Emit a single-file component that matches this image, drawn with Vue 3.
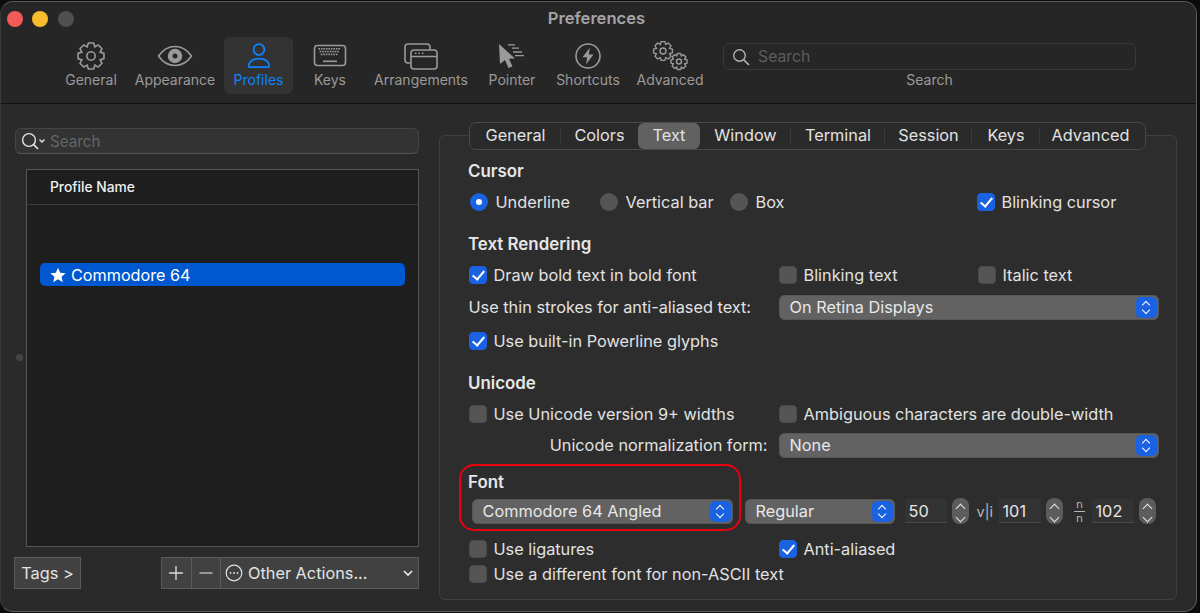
<script setup>
const tools = [
  { name: 'General', w: 70, icon: 'gear' },
  { name: 'Appearance', w: 98, icon: 'eye' },
  { name: 'Profiles', w: 69, icon: 'person', active: true },
  { name: 'Keys', w: 74, icon: 'keys' },
  { name: 'Arrangements', w: 108, icon: 'windows' },
  { name: 'Pointer', w: 74, icon: 'pointer' },
  { name: 'Shortcuts', w: 78, icon: 'bolt' },
  { name: 'Advanced', w: 86, icon: 'gears' }
]

const tabs = [
  { name: 'General', w: 91, sep: true },
  { name: 'Colors', w: 77 },
  { name: 'Text', w: 62, active: true },
  { name: 'Window', w: 91, sep: true },
  { name: 'Terminal', w: 94, sep: true },
  { name: 'Session', w: 87, sep: true },
  { name: 'Keys', w: 68, sep: true },
  { name: 'Advanced', w: 101 }
]

// 8 tooth cog outline, used by the General and Advanced icons
const gearPath = (cx, cy, outer, inner) => {
  const pts = []
  for (let i = 0; i < 8; i++) {
    const a = (i * Math.PI) / 4
    const spots = [[-0.42, inner], [-0.2, outer], [0.2, outer], [0.42, inner]]
    for (const [off, r] of spots) {
      const x = cx + r * Math.cos(a + off)
      const y = cy + r * Math.sin(a + off)
      pts.push(x.toFixed(2) + ' ' + y.toFixed(2))
    }
  }
  return 'M' + pts.join('L') + 'Z'
}

const keyDots = []
for (let y = 0; y < 3; y++) {
  for (let x = 0; x < 9 - y; x++) {
    keyDots.push({ x: 6 + x * 2.5 + y * 1.2, y: 7 + y * 2.8 })
  }
}
</script>

<template>
  <div class="window">
    <header class="toolbar">
      <div class="lights">
        <span class="light red"></span>
        <span class="light yellow"></span>
        <span class="light off"></span>
      </div>
      <div class="title">Preferences</div>
      <div class="tools">
        <div
          v-for="t in tools"
          :key="t.name"
          class="tool"
          :class="{ active: t.active }"
          :style="{ width: t.w + 'px' }"
        >
          <svg class="tool-icon" viewBox="0 0 40 30" width="40" height="30" fill="none" stroke="currentColor" stroke-width="1.6">
            <template v-if="t.icon === 'gear'">
              <path :d="gearPath(20, 15, 13.2, 9.8)" stroke-linejoin="round" />
              <circle cx="20" cy="15" r="4.2" />
            </template>
            <template v-else-if="t.icon === 'eye'">
              <path d="M3.5 15C8 8.5 13.5 5.5 20 5.5S32 8.5 36.5 15C32 21.5 26.5 24.5 20 24.5S8 21.5 3.5 15Z" />
              <circle cx="20" cy="15" r="7.2" fill="currentColor" stroke="none" />
              <circle cx="20" cy="15" r="2.5" fill="#262626" stroke="none" />
            </template>
            <template v-else-if="t.icon === 'person'">
              <circle cx="20" cy="8.5" r="5.4" stroke-width="1.8" />
              <path d="M10 26.2C9.3 20.5 14 17.6 20 17.6S30.7 20.5 30 26.2Z" stroke-width="1.8" stroke-linejoin="round" />
            </template>
            <template v-else-if="t.icon === 'keys'">
              <rect x="4.5" y="4.5" width="31" height="20" rx="3" />
              <rect v-for="(d, i) in keyDots" :key="i" :x="d.x + 2.4" :y="d.y" width="1.6" height="1.6" fill="currentColor" stroke="none" />
              <rect x="13" y="19.5" width="14" height="1.6" fill="currentColor" stroke="none" />
            </template>
            <template v-else-if="t.icon === 'windows'">
              <path d="M9.5 22H7a3 3 0 0 1-3-3V6a3 3 0 0 1 3-3h19a3 3 0 0 1 3 3v2.5" />
              <rect x="10" y="9" width="26" height="19" rx="3" />
              <path d="M10 15.5h26" />
              <path d="M14 12.3h1.500M17.5 12.3h1.500M21 12.3h1.500" stroke-width="1.4" />
            </template>
            <template v-else-if="t.icon === 'pointer'">
              <path d="M7 3 23 17.5 17 17.8 20.5 25.5 16.5 27 13 19 8 23Z" fill="currentColor" stroke="none" />
              <path d="M16 3.8h7M20 7.2h7M21 11h9M23 14.7h9" stroke-width="1.3" />
            </template>
            <template v-else-if="t.icon === 'bolt'">
              <circle cx="20" cy="15" r="12" />
              <path d="M21.8 6.8 14.5 16.3h4.600l-1 6.900 7.400-9.600h-4.700Z" fill="currentColor" stroke="none" />
            </template>
            <template v-else>
              <path :d="gearPath(13, 10, 9.6, 7)" stroke-width="1.4" stroke-linejoin="round" />
              <circle cx="13" cy="10" r="3" stroke-width="1.4" />
              <path :d="gearPath(29, 20.5, 8.2, 6)" stroke-width="1.4" stroke-linejoin="round" />
              <circle cx="29" cy="20.5" r="2.5" stroke-width="1.4" />
            </template>
          </svg>
          <span class="tool-label">{{ t.name }}</span>
        </div>
        <div class="search-tool">
          <div class="search-box">
            <svg viewBox="0 0 18 18" width="18" height="18" fill="none" stroke="#b0b0b0" stroke-width="1.4">
              <circle cx="7.5" cy="7.5" r="5.8" />
              <path d="M11.800 11.800 17 17" stroke-width="1.7" />
            </svg>
            <span>Search</span>
          </div>
          <span class="tool-label">Search</span>
        </div>
      </div>
    </header>

    <main class="body">
      <section class="left">
        <div class="filter">
          <svg viewBox="0 0 24 18" width="24" height="18" fill="none" stroke="#e4e4e4" stroke-width="1.4">
            <circle cx="8" cy="8" r="6.4" />
            <path d="M12.500 12.500 17 17" stroke-width="1.7" />
            <path d="M18.500 7.500 21 10l2.500-2.500" stroke-width="1.3" />
          </svg>
          <span>Search</span>
        </div>
        <div class="profiles">
          <div class="profiles-head">Profile Name</div>
          <div class="profile-row">
            <svg viewBox="0 0 24 24" width="16" height="16" fill="#ffffff">
              <path d="M12 1l3.300 7.500 8.200.800-6.200 5.400 1.900 8L12 18.500 4.800 22.700l1.900-8L.5 9.300l8.200-.800Z" />
            </svg>
            <span>Commodore 64</span>
          </div>
        </div>
        <div class="actions">
          <div class="btn tags">Tags &gt;</div>
          <div class="btn-group">
            <div class="btn square">
              <svg viewBox="0 0 16 16" width="16" height="16" stroke="#d8d8d8" stroke-width="1.4"><path d="M8 1v14M1 8h14" /></svg>
            </div>
            <div class="btn square">
              <svg viewBox="0 0 16 16" width="16" height="16" stroke="#b5b5b5" stroke-width="1.4"><path d="M1.500 8h13" /></svg>
            </div>
            <div class="btn other">
              <svg viewBox="0 0 18 18" width="18" height="18" fill="none" stroke="#e0e0e0" stroke-width="1.2">
                <circle cx="9" cy="9" r="7.8" />
                <circle cx="5.5" cy="9" r=".9" fill="#e0e0e0" stroke="none" />
                <circle cx="9" cy="9" r=".9" fill="#e0e0e0" stroke="none" />
                <circle cx="12.5" cy="9" r=".9" fill="#e0e0e0" stroke="none" />
              </svg>
              <span class="other-text">Other Actions...</span>
              <svg viewBox="0 0 10 7" width="10" height="7" fill="none" stroke="#e8e8e8" stroke-width="1.6"><path d="M1 1l4 4 4-4" /></svg>
            </div>
          </div>
        </div>
      </section>

      <section class="right">
        <div class="panel">
          <div class="tabs">
            <div
              v-for="t in tabs"
              :key="t.name"
              class="tab"
              :class="{ active: t.active, sep: t.sep }"
              :style="{ width: t.w + 'px' }"
            >{{ t.name }}</div>
          </div>

          <h3 class="heading">Cursor</h3>
          <div class="row gap-s">
            <label class="opt w130"><span class="radio on"></span><span class="radio-text">Underline</span></label>
            <label class="opt w130"><span class="radio"></span><span class="radio-text">Vertical bar</span></label>
            <label class="opt w248"><span class="radio"></span><span class="radio-text">Box</span></label>
            <label class="opt"><span class="check on"></span>Blinking cursor</label>
          </div>

          <h3 class="heading sec">Text Rendering</h3>
          <div class="row gap-s">
            <label class="opt w310"><span class="check on"></span>Draw bold text in bold font</label>
            <label class="opt w199"><span class="check"></span>Blinking text</label>
            <label class="opt"><span class="check"></span>Italic text</label>
          </div>
          <div class="row gap-m">
            <span class="w310">Use thin strokes for anti-aliased text:</span>
            <div class="select w380">On Retina Displays<span class="knob"></span></div>
          </div>
          <div class="row gap-l">
            <label class="opt"><span class="check on"></span>Use built-in Powerline glyphs</label>
          </div>

          <h3 class="heading sec">Unicode</h3>
          <div class="row gap-s">
            <label class="opt w310"><span class="check"></span>Use Unicode version 9+ widths</label>
            <label class="opt"><span class="check"></span>Ambiguous characters are double-width</label>
          </div>
          <div class="row gap-n">
            <span class="w299 right-text">Unicode normalization form:</span>
            <div class="select w380">None<span class="knob"></span></div>
          </div>

          <h3 class="heading sec-font">Font</h3>
          <div class="row font-row">
            <div class="select font-select">Commodore 64 Angled<span class="knob"></span></div>
            <div class="select style-select">Regular<span class="knob"></span></div>
            <div class="num">50</div>
            <div class="stepper"><i class="up"></i><i class="down"></i></div>
            <span class="vli">v|i</span>
            <div class="num">101</div>
            <div class="stepper"><i class="up"></i><i class="down"></i></div>
            <span class="nn"><b>n</b><b>n</b></span>
            <div class="num">102</div>
            <div class="stepper"><i class="up"></i><i class="down"></i></div>
          </div>
          <div class="row gap-f">
            <label class="opt w310"><span class="check"></span>Use ligatures</label>
            <label class="opt"><span class="check on"></span>Anti-aliased</label>
          </div>
          <div class="row gap-t">
            <label class="opt"><span class="check"></span>Use a different font for non-ASCII text</label>
          </div>

          <div class="highlight"></div>
        </div>
      </section>
      <span class="split-dot"></span>
    </main>
  </div>
</template>

<style>
html, body {
  background: #0c0c0c;
}
</style>

<style scoped>
.window {
  position: relative;
  width: 1197px;
  height: 611px;
  margin-top: 1px;
  box-sizing: border-box;
  border: 1px solid #5c5c5c;
  border-left-color: #3a3a3a;
  border-radius: 13px;
  overflow: hidden;
  background: #2a2a2a;
  color: #e2e2e2;
  font-family: Inter, "Liberation Sans", sans-serif;
  font-size: 16.3px;
}

.toolbar {
  position: relative;
  height: 101px;
  background: #262626;
  border-bottom: 1px solid #101010;
}

.lights {
  position: absolute;
  top: 9px;
  left: 6px;
  display: flex;
  gap: 9.3px;
}

.light {
  width: 16px;
  height: 16px;
  border-radius: 50%;
}

.red { background: #f25a57; }
.yellow { background: #f8bd2e; }
.off { background: #4f4f4f; }

.title {
  padding-top: 6px;
  height: 27px;
  box-sizing: border-box;
  text-align: center;
  font-size: 16.6px;
  font-weight: 600;
  color: #a4a4a4;
  margin-right: 4px;
}

.tools {
  display: flex;
  align-items: flex-start;
  padding-left: 55px;
  margin-top: 8px;
}

.tool {
  flex: none;
  height: 57px;
  display: flex;
  flex-direction: column;
  align-items: center;
  border-radius: 6px;
  color: #9a9a9a;
}

.tool.active {
  background: #333333;
  color: #0a84ff;
}

.tool-icon {
  margin-top: 4px;
}

.tool-label {
  font-size: 14px;
  line-height: 18px;
  white-space: nowrap;
}

.search-tool {
  margin-left: 10px;
  margin-top: 6px;
  width: 413px;
  display: flex;
  flex-direction: column;
  align-items: center;
  color: #9a9a9a;
}

.search-box {
  align-self: stretch;
  height: 27px;
  box-sizing: border-box;
  border: 1px solid #383838;
  border-radius: 6px;
  display: flex;
  align-items: center;
  gap: 8px;
  padding-left: 8px;
  color: #5d5d5d;
  font-size: 15.8px;
  margin-bottom: 1px;
}

.body {
  position: relative;
  display: flex;
  height: 508px;
}

.left {
  width: 438px;
  flex: none;
  box-sizing: border-box;
  padding: 24px 0 0 14px;
}

.filter {
  width: 404px;
  height: 26px;
  box-sizing: border-box;
  border: 1px solid #444444;
  border-bottom-color: #555555;
  border-radius: 6px;
  background: #333333;
  display: flex;
  align-items: center;
  gap: 5px;
  padding-left: 5px;
  color: #666666;
  font-size: 15.2px;
}

.profiles {
  width: 393px;
  height: 378px;
  margin: 15px 0 0 11px;
  box-sizing: border-box;
  border: 1.5px solid #555555;
  background: #1e1e1e;
}

.profiles-head {
  height: 35px;
  box-sizing: border-box;
  border-bottom: 1px solid #3c3c3c;
  padding-left: 23px;
  line-height: 35px;
  font-size: 13.8px;
  font-weight: 500;
  color: #f0f0f0;
}

.profile-row {
  margin: 58px 13px 0 13px;
  height: 23px;
  box-sizing: border-box;
  padding-left: 10px;
  border-radius: 5px;
  background: #0058d0;
  color: #ffffff;
  font-size: 16.2px;
  display: flex;
  align-items: center;
  gap: 5px;
}

.actions {
  display: flex;
  justify-content: space-between;
  width: 405px;
  margin: 10px 0 0 -1px;
}

.btn {
  height: 32px;
  box-sizing: border-box;
  border: 1.5px solid #5a5a5a;
  background: #414141;
  display: flex;
  align-items: center;
  justify-content: center;
  color: #e4e4e4;
}

.tags {
  width: 67px;
}

.btn-group {
  display: flex;
  width: 258px;
}

.square {
  width: 29.5px;
  border-right-width: 0;
}

.other {
  flex: 1;
  justify-content: flex-start;
  gap: 5px;
  padding: 0 5px 0 4px;
}

.other-text {
  flex: 1;
}

.right {
  flex: 1;
  padding-top: 31px;
}

.panel {
  position: relative;
  width: 738px;
  height: 464.5px;
  box-sizing: border-box;
  border: 1.5px solid #3e3e3e;
  border-radius: 6px;
  background: #2d2d2d;
  padding: 25px 0 0 28.5px;
}

.tabs {
  position: absolute;
  top: -14px;
  left: 29px;
  display: flex;
  height: 28px;
  padding-right: 4px;
  box-sizing: border-box;
  border: 1px solid #4a4a4a;
  border-radius: 7px;
  background: #2a2a2a;
}

.tab {
  position: relative;
  flex: none;
  text-align: center;
  line-height: 25px;
  height: 26px;
  color: #e2e2e2;
  box-sizing: border-box;
}

.tab.sep::after {
  content: "";
  position: absolute;
  right: 0;
  top: 6px;
  width: 1px;
  height: 14px;
  background: #3d3d3d;
}

.tab.active {
  background: #616161;
  border-radius: 6px;
}

.heading {
  margin: 0 0 0 -0.5px;
  height: 20px;
  line-height: 21px;
  font-size: 16.9px;
  font-weight: 600;
  color: #e6e6e6;
}

.sec { margin-top: 20px; }
.sec-font { margin-top: 15px; }

.row {
  display: flex;
  align-items: center;
  height: 24px;
  white-space: nowrap;
}

.gap-s { margin-top: 9px; }
.gap-m { margin-top: 8px; }
.gap-l { margin-top: 10px; }
.gap-n { margin-top: 7px; }
.gap-f { margin-top: 13px; }
.gap-t { margin-top: 1px; }

.opt {
  display: flex;
  align-items: center;
}

.w130 { width: 130px; flex: none; }
.w248 { width: 248px; flex: none; }
.w310 { width: 310px; flex: none; }
.w199 { width: 199px; flex: none; }
.w380 { width: 380px; flex: none; }
.w299 { width: 299px; flex: none; margin-right: 11px; }

.right-text {
  text-align: right;
}

.check {
  width: 18px;
  height: 18px;
  flex: none;
  box-sizing: border-box;
  margin-right: 7px;
  border-radius: 4px;
  background: #555555;
  border: 1px solid #4a4a4a;
  position: relative;
}

.check.on {
  background: #1a62e2;
  border-color: #1a62e2;
}

.check.on::after {
  content: "";
  position: absolute;
  left: 5.5px;
  top: 1px;
  width: 5px;
  height: 10px;
  border: solid #ffffff;
  border-width: 0 2.2px 2.2px 0;
  transform: rotate(40deg);
}

.radio {
  width: 18px;
  height: 18px;
  flex: none;
  margin: 0 8px 0 1px;
  border-radius: 50%;
  background: #555555;
  position: relative;
}

.radio.on {
  background: #1a62e2;
}

.radio.on::after {
  content: "";
  position: absolute;
  top: 6px;
  left: 6px;
  width: 6px;
  height: 6px;
  border-radius: 50%;
  background: #ffffff;
}

.select {
  position: relative;
  height: 25px;
  line-height: 24px;
  box-sizing: border-box;
  padding-left: 11px;
  border-radius: 6px;
  background: #626262;
  box-shadow: inset 0 0 0 1px #575757;
  color: #e8e8e8;
}

.knob {
  position: absolute;
  top: 2px;
  right: 2px;
  width: 21px;
  height: 21px;
  border-radius: 5px;
  background: #1a62e2;
}

.knob::before,
.knob::after {
  content: "";
  position: absolute;
  left: 7px;
  width: 5px;
  height: 5px;
  border: solid #ffffff;
  border-width: 1.5px 0 0 1.5px;
}

.knob::before {
  top: 5px;
  transform: rotate(45deg);
}

.knob::after {
  top: 10px;
  transform: rotate(225deg);
}

.font-row {
  height: 26px;
  margin-top: 6px;
}

.font-select {
  width: 261px;
  margin-left: 3px;
  flex: none;
}

.style-select {
  width: 150px;
  margin-left: 12px;
  flex: none;
}

.num {
  width: 42px;
  height: 24px;
  flex: none;
  box-sizing: border-box;
  margin-left: 10px;
  padding-left: 4px;
  line-height: 24px;
  background: #333333;
  border-bottom: 1px solid #4a4a4a;
  color: #e6e6e6;
}

.stepper {
  width: 17px;
  height: 26px;
  flex: none;
  margin-left: 5px;
  border-radius: 8px;
  background: #5c5c5c;
  display: flex;
  flex-direction: column;
  align-items: center;
}

.stepper i {
  display: block;
  width: 6px;
  height: 6px;
  border: solid #e8e8e8;
  border-width: 1.5px 0 0 1.5px;
  transform: rotate(45deg);
}

.stepper .up { margin-top: 7px; }

.stepper .down {
  margin-top: 2px;
  transform: rotate(225deg);
}

.vli {
  flex: none;
  width: 20px;
  margin-left: 8px;
  margin-right: -8px;
  font-size: 14.5px;
  color: #b8b8b8;
}

.nn {
  flex: none;
  width: 16px;
  margin-left: 9px;
  margin-right: -6px;
  display: flex;
  flex-direction: column;
  align-items: center;
  font-family: "DejaVu Sans", sans-serif;
  font-size: 11px;
  line-height: 13px;
  color: #b8b8b8;
}

.nn b {
  font-weight: 400;
}

.nn b:first-child {
  border-bottom: 1px solid #b8b8b8;
  padding: 0 2px;
}

.highlight {
  position: absolute;
  left: 18.5px;
  top: 328px;
  width: 282px;
  height: 67px;
  box-sizing: border-box;
  border: 2px solid #ea0010;
  border-radius: 15px;
}

.split-dot {
  position: absolute;
  left: 15px;
  top: 250px;
  width: 7px;
  height: 7px;
  border-radius: 50%;
  background: #444444;
}
</style>
